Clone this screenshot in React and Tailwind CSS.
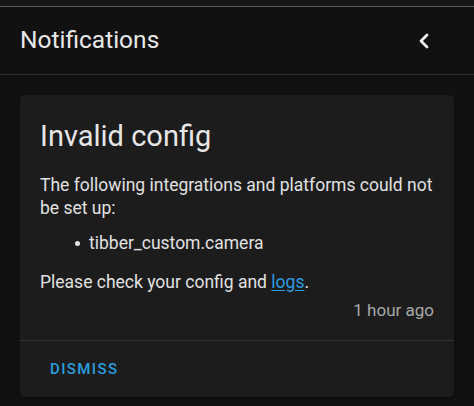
import React from 'react';

const ChevronLeft = () => (
  <svg width="24" height="24" viewBox="0 0 24 24" fill="none">
    <path d="M15 6l-6 6 6 6" stroke="#f2f2f2" strokeWidth="2.8" strokeLinecap="round" strokeLinejoin="round" />
  </svg>
);

export default function App() {
  return (
    <div className="w-[474px] h-[406px] bg-[#111111] overflow-hidden font-['Roboto',sans-serif] text-[#e1e1e1]">
      <div className="h-[6px] bg-[#161616]" />
      <div className="h-[1px] bg-[#5a5a5a]" />

      {/* Header */}
      <div className="h-[68px] flex items-center justify-between pl-[20px] pr-[38px] border-b border-[#2c2c2c]">
        <h1 className="text-[24.5px] text-[#e8e8e8]">Notifications</h1>
        <ChevronLeft />
      </div>

      {/* Card */}
      <div className="px-[20px] pt-[20px]">
        <div className="bg-[#1c1c1c] rounded-[5px] shadow-[0_1px_3px_rgba(0,0,0,0.4)]">
          <div className="px-[20px] pt-[23px] pb-[18px]">
            <h2 className="text-[29px] leading-[36px] text-[#e6e6e6]">Invalid config</h2>
            <p className="mt-[20px] text-[17.5px] leading-[23px]">
              The following integrations and platforms could not be set up:
            </p>
            <ul className="mt-[12px] pl-[35px] text-[17.5px] leading-[23px]">
              <li className="flex items-center gap-[9px]">
                <span className="w-[5px] h-[5px] rounded-full bg-[#e1e1e1]" />
                <span>tibber_custom.camera</span>
              </li>
            </ul>
            <p className="mt-[16px] text-[17.5px] leading-[23px]">
              Please check your config and{' '}
              <a className="text-[#2e9be0] underline underline-offset-2">logs</a>.
            </p>
            <div className="mt-[5px] text-right text-[17px] leading-[23px] text-[#a8a8a8]">1 hour ago</div>
          </div>
          <div className="border-t border-[#333333] px-[10px] h-[57px] flex items-center">
            <button className="px-[20px] text-[15px] font-medium tracking-[1.4px] text-[#2a9ddf]">DISMISS</button>
          </div>
        </div>
      </div>
    </div>
  );
}
